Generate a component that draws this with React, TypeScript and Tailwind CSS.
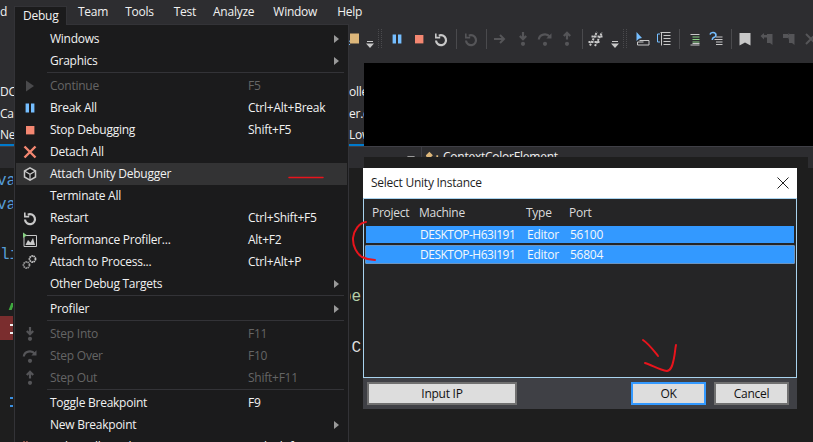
import type { ReactNode } from "react";

const ui = "font-['Open_Sans','Noto_Sans',sans-serif] text-[12px] tracking-[-0.25px]";
const off = "#555558";
const fg = "#c8c8c8";
const blue = "#75beff";
const salmon = "#f48771";

function Ico({ children, className = "", color = "none" }: { children: ReactNode; className?: string; color?: string }) {
  return (
    <svg viewBox="0 0 16 16" fill={color} className={`w-4 h-4 shrink-0 overflow-visible ${className}`}>
      {children}
    </svg>
  );
}

const Play = ({ c }: { c: string }) => <Ico><path d="M4 2.500v11l8-5.500z" fill={c} /></Ico>;
const Pause = ({ className = "" }: { className?: string }) => (
  <Ico className={className}>
    <path d="M3.600 3.600h3.400v8.800H3.600zM9 3.600h3.400v8.800H9z" fill={blue} />
  </Ico>
);
const Stop = ({ className = "" }: { className?: string }) => (
  <Ico className={className}><path d="M4 4h8.400v8.400H4z" fill={salmon} /></Ico>
);
const Restart = ({ className = "", c = fg }: { className?: string; c?: string }) => (
  <Ico className={className}>
    <path d="M5.800 4.700A5 5 0 1 1 3 9.500" stroke={c} strokeWidth="2.200" />
    <path d="M2.800 2.400v4.200h4.400" stroke={c} strokeWidth="1.600" />
  </Ico>
);
const StepInto = ({ className = "" }: { className?: string }) => (
  <Ico className={className}>
    <path d="M8 1v6.500M4.800 5 8 8.200 11.200 5" stroke={off} strokeWidth="2.200" />
    <circle cx="8" cy="12.800" r="2.100" fill={off} />
  </Ico>
);
const StepOver = ({ className = "" }: { className?: string }) => (
  <Ico className={className}>
    <path d="M1.800 8.500a6 5.500 0 0 1 11-2.500" stroke={off} strokeWidth="2.200" />
    <path d="M14.500 2.300v5.200H9.300z" fill={off} />
    <circle cx="8" cy="12.800" r="2.100" fill={off} />
  </Ico>
);
const StepOut = ({ className = "" }: { className?: string }) => (
  <Ico className={className}>
    <path d="M8 8.500V2M4.800 5 8 1.800 11.200 5" stroke={off} strokeWidth="2.200" />
    <circle cx="8" cy="12.800" r="2.100" fill={off} />
  </Ico>
);

function DropGlyph({ className = "" }: { className?: string }) {
  return (
    <svg viewBox="0 0 8 16" className={`w-2 h-4 shrink-0 overflow-visible ${className}`}>
      <path d="M1 10h6v1H1zM0 12.500h8L4 17z" fill={fg} />
    </svg>
  );
}

function Grip({ className = "" }: { className?: string }) {
  return (
    <svg viewBox="0 0 6 20" className={`w-[6px] h-[20px] shrink-0 ${className}`}>
      <path d="M1.500 0v20M4.500 0v20" stroke="#4a4a4d" strokeWidth="1" strokeDasharray="1 1" />
    </svg>
  );
}

function Sep() {
  return <div className="w-px h-[20px] ml-[7px] bg-[#4a4a4d] shrink-0" />;
}

function MenuTab({ label, className }: { label: string; className: string }) {
  return <span className={`text-[#f1f1f1] ${className}`}>{label}</span>;
}

function Toolbar() {
  return (
    <div className="h-[30px] pl-[346px] flex items-center bg-[#2d2d30] overflow-hidden">
      <Ico>
        <path d="M4 2.500h9v10H4z" fill="#dcb67a" />
        <path d="M4 10a1.800 1.800 0 1 0 .1 3.600" stroke={blue} strokeWidth="1" />
      </Ico>
      <DropGlyph className="ml-[4px]" />
      <Grip className="ml-[3px]" />
      <Pause className="ml-[6px]" />
      <Stop className="ml-[6px]" />
      <Restart className="ml-[6px]" />
      <Sep />
      <Restart className="ml-[6px]" c={off} />
      <Sep />
      <Ico className="ml-[5px]">
        <path d="M2 8h10M8 4l4 4-4 4" stroke={off} strokeWidth="2" />
      </Ico>
      <StepInto className="ml-[7px]" />
      <StepOver className="ml-[6px]" />
      <StepOut className="ml-[6px]" />
      <Sep />
      <Ico className="ml-[5px]">
        <path d="M2 14.500 9 1M7 15 14 1.500M.5 11h12M3.500 5.500h12" stroke={fg} strokeWidth="2" strokeDasharray="2 1" />
      </Ico>
      <DropGlyph className="ml-[7px]" />
      <Grip className="ml-[3px]" />
      <Ico className="ml-[6px]">
        <path d="M2.500 1v9l2.400-2.200L8 7z" fill={blue} />
        <path d="M5.500 9.500h9.500v4.500H3.500v-3h6" stroke={fg} strokeWidth="1" />
      </Ico>
      <Ico className="ml-[6px]">
        <path d="M4 3H1.500v8H4" stroke={blue} strokeWidth="1" />
        <path d="M5.500 1v13.500M4.500 1.500h10M7.500 4.500h7M7.500 7.500h7M7.500 10.500h7M7.500 13.500h7" stroke={fg} strokeWidth="1" />
      </Ico>
      <Sep />
      <Ico className="ml-[6px]">
        <path d="M4.500 3.500h9M6.500 12.500h7M4.500 14h9" stroke={fg} strokeWidth="1" />
        <path d="M6.500 6h7M6.500 8.500h7M6.500 11h7" stroke="#89d185" strokeWidth="1" />
      </Ico>
      <Ico className="ml-[6px]">
        <path d="M2 3.500a3 2.500 0 1 1 3.500 3c-1 .5-1.200 1-1.200 2.500" stroke={blue} strokeWidth="1.600" />
        <path d="M6.500 8.500h8M8 11h6.500M8 13.500h6.500M8 6h6.500" stroke={fg} strokeWidth="1" />
      </Ico>
      <Sep />
      <Ico className="ml-[5px]">
        <path d="M2.500 2h11v12.500L8 11.500l-5.500 3z" fill={fg} />
      </Ico>
      <Ico className="ml-[6px]">
        <path d="M8 3h5.500v11l-2.500-2H8z" fill={off} />
        <path d="M1.500 5 5 2v2h3v2.500H5v2z" fill={off} />
      </Ico>
      <Ico className="ml-[6px]">
        <path d="M7 3H2v4h5zM8 3h5.500v11l-2.500-2H8z" fill={off} />
        <path d="M11 5 7.500 2v2h-5v2.500h5v2z" fill={off} />
      </Ico>
      <Ico className="ml-[6px]">
        <path d="M3 3l10 10M13 3 3 13" stroke={off} strokeWidth="2" />
      </Ico>
    </div>
  );
}

type Entry = {
  label?: string;
  keys?: string;
  icon?: ReactNode;
  sub?: boolean;
  off?: boolean;
  hot?: boolean;
};

const entries: Entry[] = [
  { label: "Windows", sub: true },
  { label: "Graphics", sub: true },
  {},
  { label: "Continue", keys: "F5", off: true, icon: <Play c="#4a4a4c" /> },
  { label: "Break All", keys: "Ctrl+Alt+Break", icon: <Pause /> },
  { label: "Stop Debugging", keys: "Shift+F5", icon: <Stop /> },
  {
    label: "Detach All",
    icon: <Ico><path d="M2.500 2.500l11 11M13.500 2.500l-11 11" stroke={salmon} strokeWidth="2.400" /></Ico>,
  },
  {
    label: "Attach Unity Debugger",
    hot: true,
    icon: (
      <Ico>
        <path d="M8 1.800 13.500 5v6L8 14.200 2.500 11V5z" fill="#1b1b1c" stroke={fg} strokeWidth="1.500" />
        <path d="M2.500 5 8 8.200 13.500 5M8 8.200v6" stroke={fg} strokeWidth="1.200" />
      </Ico>
    ),
  },
  { label: "Terminate All" },
  { label: "Restart", keys: "Ctrl+Shift+F5", icon: <Restart /> },
  {
    label: "Performance Profiler...",
    keys: "Alt+F2",
    icon: (
      <Ico>
        <path d="M2 3.500h12.500v11H2z" stroke={fg} strokeWidth="1" />
        <path d="M3.500 13 6 8l2.500 2.500L11 6l2 7z" fill={fg} />
        <path d="M1 .5v5.500l4-2.800z" fill="#89d185" />
      </Ico>
    ),
  },
  {
    label: "Attach to Process...",
    keys: "Ctrl+Alt+P",
    icon: (
      <Ico>
        <circle cx="10.500" cy="5" r="3" stroke={fg} strokeWidth="1.800" strokeDasharray="1.500 .6" />
        <circle cx="4.500" cy="11" r="3" stroke="#9a9a9a" strokeWidth="1.800" strokeDasharray="1.500 .6" />
      </Ico>
    ),
  },
  { label: "Other Debug Targets", sub: true },
  {},
  { label: "Profiler", sub: true },
  {},
  { label: "Step Into", keys: "F11", off: true, icon: <StepInto /> },
  { label: "Step Over", keys: "F10", off: true, icon: <StepOver /> },
  { label: "Step Out", keys: "Shift+F11", off: true, icon: <StepOut /> },
  {},
  { label: "Toggle Breakpoint", keys: "F9" },
  { label: "New Breakpoint", sub: true },
  {
    label: "Delete All Breakpoints",
    keys: "Ctrl+Shift+F9",
    icon: (
      <Ico>
        <circle cx="9" cy="8" r="5" fill="#d0d0d0" />
        <path d="M1.500 2.500l4 4M5.500 2.500l-4 4" stroke={salmon} strokeWidth="1.500" />
      </Ico>
    ),
  },
];

function MenuRow({ item }: { item: Entry }) {
  if (!item.label) {
    return (
      <div className="h-[3px] pl-[31px] pr-[3px]">
        <div className="h-px bg-[#333337]" />
      </div>
    );
  }
  return (
    <div
      className={`h-[22px] flex items-center pl-[6px] ${item.hot ? "bg-[#333334]" : ""} ${
        item.off ? "text-[#656565]" : "text-[#f1f1f1]"
      }`}
    >
      <div className="w-4 h-4 mr-[12px] shrink-0">{item.icon}</div>
      <span className="w-[198px] shrink-0 whitespace-nowrap">{item.label}</span>
      <span className="whitespace-nowrap">{item.keys}</span>
      {item.sub && (
        <svg viewBox="0 0 5 8" className="w-[5px] h-2 ml-[86px] shrink-0">
          <path d="M0 0l5 4-5 4z" fill="#999" />
        </svg>
      )}
    </div>
  );
}

function DebugMenu() {
  return (
    <div className="absolute left-[14px] top-[24px] w-[335px] h-[440px] pt-[3px] px-px bg-[#1b1b1c] border border-[#333337]">
      {entries.map((item, i) => (
        <MenuRow key={i} item={item} />
      ))}
    </div>
  );
}

function Btn({ label, className }: { label: string; className: string }) {
  return (
    <button className={`h-[23px] bg-[#dddddd] border-2 text-[#111] flex items-center justify-center ${className}`}>
      {label}
    </button>
  );
}

function InstanceRow({ port, className }: { port: string; className: string }) {
  return (
    <div className={`grid grid-cols-[53px_107px_43px_1fr] items-center bg-[#3399ff] text-[#f4f8fc] ${className}`}>
      <span />
      <span className="tracking-[-0.5px]">DESKTOP-H63I191</span>
      <span>Editor</span>
      <span>{port}</span>
    </div>
  );
}

function UnityDialog() {
  return (
    <div className="absolute left-[363px] top-[168px] w-[434px] h-[241px] flex flex-col shadow-[6px_-6px_0_5px_#1e1e1e]">
      <div className="h-[30px] bg-white flex items-center justify-between pl-[8px] pr-[8px] text-[#1e1e1e]">
        <span>Select Unity Instance</span>
        <svg viewBox="0 0 12 12" className="w-3 h-3">
          <path d="M.5.500l11 11M11.500.500l-11 11" stroke="#222" strokeWidth="1" />
        </svg>
      </div>
      <div className="h-[180px] bg-[#252526] border border-[#a9d3ee] text-[#dcdcdc]">
        <div className="grid grid-cols-[55px_107px_43px_1fr] items-center h-[26px] pt-[1px]">
          <span className="pl-[8px]">Project</span>
          <span>Machine</span>
          <span>Type</span>
          <span>Port</span>
        </div>
        <InstanceRow port="56100" className="h-[17px] mx-[2px] mt-[1px] pl-px" />
        <InstanceRow port="56804" className="h-[19px] mx-px mt-[2px] pl-px border border-[#6c93bd] rounded-[1px]" />
      </div>
      <div className="h-[31px] bg-[#3f4045] flex items-center px-[4px]">
        <Btn label="Input IP" className="w-[150px] border-[#707070]" />
        <Btn label="OK" className="w-[75px] ml-auto border-[#3399ff]" />
        <Btn label="Cancel" className="w-[75px] ml-[8px] mr-[4px] border-[#707070]" />
      </div>
    </div>
  );
}

export default function App() {
  return (
    <div className={`relative w-[813px] h-[442px] overflow-hidden bg-[#1e1e1e] ${ui}`}>
      {/* menu bar */}
      <div className="h-[24px] flex items-center bg-[#2d2d30]">
        <MenuTab label="d" className="w-[14px]" />
        <div className="relative z-10 self-end -mb-px w-[53px] h-[19px] pl-[8px] flex items-center bg-[#1b1b1c] border-x border-t border-[#333337] text-[#f1f1f1]">
          Debug
        </div>
        <MenuTab label="Team" className="ml-[11px]" />
        <MenuTab label="Tools" className="ml-[17px]" />
        <MenuTab label="Test" className="ml-[20px]" />
        <MenuTab label="Analyze" className="ml-[17px]" />
        <MenuTab label="Window" className="ml-[19px]" />
        <MenuTab label="Help" className="ml-[20px]" />
      </div>
      <Toolbar />
      <div className="h-[9px] bg-[#2d2d30]" />

      {/* doc tabs, black area */}
      <div className="h-[83px] flex bg-[#2d2d30]">
        <div className="w-[364px] shrink-0 pt-[18px] text-[#f1f1f1]">
          <div className="h-[22px] flex justify-between items-center"><span className="w-[14px] overflow-hidden">DC</span><span className="w-[15px] overflow-hidden whitespace-nowrap">ollec</span></div>
          <div className="h-[22px] flex justify-between items-center"><span className="w-[14px] overflow-hidden">Cap</span><span className="w-[15px] overflow-hidden whitespace-nowrap">er.cs</span></div>
          <div className="h-[19px] flex justify-between items-center"><span className="w-[14px] overflow-hidden">New</span><span className="w-[15px] overflow-hidden whitespace-nowrap">Low</span></div>
          <div className="h-[2px] bg-[#007acc]" />
        </div>
        <div className="flex-1 bg-black" />
      </div>

      {/* editor */}
      <div className="h-[22px] flex items-center bg-[#2d2d30] border-t border-[#3f3f46]">
        <svg viewBox="0 0 8 5" className="w-2 h-[5px] ml-[407px] mt-[2px]"><path d="M0 0h8L4 5z" fill="#999" /></svg>
        <div className="w-px h-[22px] ml-[6px] bg-[#3f3f46]" />
        <svg viewBox="0 0 16 12" className="w-[14px] h-3 ml-[3px] -mt-[3px]"><path d="M1 5l4-4 4 4-2 2 2 2h4V5h2v6H3z" fill="#dcb67a" /></svg>
        <span className="ml-[4px] -mt-[2px] text-[#f1f1f1]">ContextColorElement</span>
      </div>
      <div className="flex font-['Liberation_Mono',monospace] text-[16px] tracking-normal">
        <div className="w-[13px] overflow-hidden shrink-0">
          <div className="mt-[1px] h-[24px] text-[#569cd6] whitespace-nowrap -ml-[3px]">va</div>
          <div className="h-[25px] text-[#569cd6] whitespace-nowrap -ml-[3px]">va</div>
          <div className="h-[24px] mt-[25px] text-[#569cd6] whitespace-nowrap">li</div>
          <div className="mt-[36px] h-[7px] w-[3px] ml-[10px] bg-[#3fa93f] skew-x-[-20deg]" />
          <div className="mt-[6px] h-[24px] pt-[8px] bg-[#7a2d2e] flex flex-col items-end gap-[6px]">
            <div className="w-[3px] h-[2px] bg-[#f1f1f1]" />
            <div className="w-[3px] h-[2px] bg-[#f1f1f1]" />
          </div>
          <div className="mt-[57px] flex flex-col items-end gap-[6px]">
            <div className="w-[3px] h-[2px] bg-[#3a8fe0]" />
            <div className="w-[3px] h-[2px] bg-[#3a8fe0]" />
          </div>
        </div>
        <div className="w-[337px] shrink-0" />
        <div className="w-[13px] overflow-hidden shrink-0">
          <div className="mt-[117px] h-[24px] text-[#b5cea8] whitespace-nowrap -ml-[8px]">pe</div>
          <div className="mt-[27px] h-[24px] text-[#dcdcdc] whitespace-nowrap -ml-[8px]">tC</div>
        </div>
      </div>

      <DebugMenu />
      <UnityDialog />

      {/* red pen marks */}
      <svg viewBox="0 0 813 442" className="absolute inset-0 w-[813px] h-[442px] pointer-events-none" fill="none" stroke="#e8141c" strokeWidth="2" strokeLinecap="round" strokeLinejoin="round">
        <path d="M289 177.500h34" strokeWidth="1.500" />
        <path d="M366 222c-7 1-12 8-13 16-.5 8 4 16 9 19 4 2 9 3 13 3" />
        <path d="M643 340c6 4 11 11 15 16" />
        <path d="M645 363c7 2 14 7 22 8 5-1 6-8 7-13 1-4 1-9 2-13" />
      </svg>
    </div>
  );
}
